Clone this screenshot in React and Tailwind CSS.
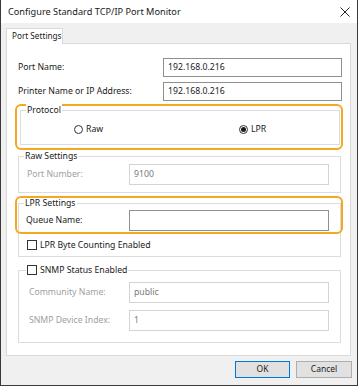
const font = { fontFamily: '"Noto Sans", "Open Sans", sans-serif' }

const Radio = ({ checked, label }) => (
  <div className="flex items-center gap-[3px]">
    <span className="w-[9px] h-[9px] rounded-full border border-[#333] bg-white flex items-center justify-center">
      {checked && <span className="w-[5px] h-[5px] rounded-full bg-[#1a1a1a]" />}
    </span>
    <span className="text-[8.7px] leading-[12px] text-[#1a1a1a]">{label}</span>
  </div>
)

const Check = ({ label }) => (
  <div className="flex items-center gap-[3px]">
    <span className="w-[10px] h-[10px] border border-[#333] bg-white" />
    <span className="text-[8.7px] leading-[12px] text-[#1a1a1a]">{label}</span>
  </div>
)

const Field = ({ value, disabled }) => (
  <div
    className={
      "w-[200px] h-[21px] flex items-center pl-[4px] text-[8.7px] " +
      (disabled ? "border border-[#d4d4d4] text-[#7a7a7a]" : "border border-[#8f8f8f] text-[#1a1a1a]")
    }
  >
    {value}
  </div>
)

const Legend = ({ children }) => (
  <span className="absolute left-[5px] -top-[7px] bg-white px-[1px] text-[8.7px] leading-[12px] text-[#1a1a1a]">
    {children}
  </span>
)

export default function App() {
  return (
    <div style={font} className="w-[358px] h-[386px] bg-[#f0f0f0] border-l border-r border-b border-[#3a3a3a] flex flex-col">
      <div className="h-[23px] bg-white flex items-center justify-between pl-[7px] pr-[7px]">
        <span className="text-[9.2px] text-[#1a1a1a]">Configure Standard TCP/IP Port Monitor</span>
        <svg width="10" height="10" viewBox="0 0 10 10" className="mt-[1px]">
          <path d="M0.5 0.5 L9.5 9.5 M9.5 0.5 L0.5 9.5" stroke="#222" strokeWidth="1" fill="none" />
        </svg>
      </div>

      <div className="pt-[5px] pl-[5px] pr-[5px] flex flex-col">
        <div className="flex">
          <div className="relative z-10 -mb-px w-[57px] h-[16px] bg-white border border-b-0 border-[#d9d9d9] flex items-center pl-[5px] text-[8.2px] whitespace-nowrap text-[#1a1a1a]">
            Port Settings
          </div>
        </div>

        <div className="h-[313px] mr-px bg-white border border-[#d9d9d9] flex flex-col">
          <div className="mt-[14px] h-[19px] flex items-center pl-[11px]">
            <span className="w-[145px] text-[8.7px] text-[#1a1a1a]">Port Name:</span>
            <div className="w-[179px] h-[19px] border border-[#8f8f8f] flex items-center pl-[4px] text-[8.7px] text-[#1a1a1a]">192.168.0.216</div>
          </div>
          <div className="mt-[5px] h-[19px] flex items-center pl-[11px]">
            <span className="w-[145px] text-[8.7px] text-[#1a1a1a]">Printer Name or IP Address:</span>
            <div className="w-[179px] h-[19px] border border-[#8f8f8f] flex items-center pl-[4px] text-[8.7px] text-[#1a1a1a]">192.168.0.216</div>
          </div>

          <div className="mt-[3px] ml-[8px] w-[328px] h-[46px] rounded-[6px] border-2 border-[#f5a623] pt-[4px] pl-[3px]">
            <div className="relative w-[320px] h-[35px] border border-[#dcdcdc] flex items-center pt-[3px]">
              <Legend>Protocol</Legend>
              <div className="w-[218px] pl-[53px]">
                <Radio label="Raw" />
              </div>
              <Radio checked label="LPR" />
            </div>
          </div>

          <div className="relative mt-[6px] ml-[11px] w-[323px] h-[37px] border border-[#dcdcdc] pt-[7px] pl-[8px] flex">
            <Legend>Raw Settings</Legend>
            <div className="h-[21px] flex items-center">
              <span className="w-[102px] text-[8.7px] text-[#a0a0a0]">Port Number:</span>
              <Field disabled value="9100" />
            </div>
          </div>

          <div className="relative mt-[10px] ml-[11px] w-[323px] h-[54px] border border-[#dcdcdc] pt-[6px] pl-[7px] flex flex-col">
            <Legend>LPR Settings</Legend>
            <div className="h-[21px] flex items-center">
              <span className="w-[103px] text-[8.7px] text-[#1a1a1a]">Queue Name:</span>
              <Field value="" />
            </div>
            <div className="mt-[8px] pl-px">
              <Check label="LPR Byte Counting Enabled" />
            </div>
            <div className="absolute -left-[4px] -top-[8px] w-[328px] h-[38px] rounded-[6px] border-2 border-[#f5a623] pointer-events-none" />
          </div>

          <div className="relative mt-[13px] ml-[11px] w-[323px] h-[73px] border border-[#dcdcdc] pt-[11px] pl-[10px] flex flex-col">
            <div className="absolute left-[7px] -top-[7px] bg-white px-[1px]">
              <Check label="SNMP Status Enabled" />
            </div>
            <div className="h-[21px] flex items-center">
              <span className="w-[100px] text-[8.7px] text-[#a0a0a0]">Community Name:</span>
              <Field disabled value="public" />
            </div>
            <div className="mt-[7px] h-[21px] flex items-center">
              <span className="w-[100px] text-[8.7px] text-[#a0a0a0]">SNMP Device Index:</span>
              <Field disabled value="1" />
            </div>
          </div>
        </div>

        <div className="mt-[5px] flex justify-end gap-[6px]">
          <button className="w-[55px] h-[17px] bg-[#e1e1e1] border border-[#0078d7] text-[8.5px] text-[#1a1a1a] flex items-center justify-center">OK</button>
          <button className="w-[56px] h-[17px] bg-[#e1e1e1] border border-[#adadad] text-[8.5px] text-[#1a1a1a] flex items-center justify-center">Cancel</button>
        </div>
      </div>
    </div>
  )
}
